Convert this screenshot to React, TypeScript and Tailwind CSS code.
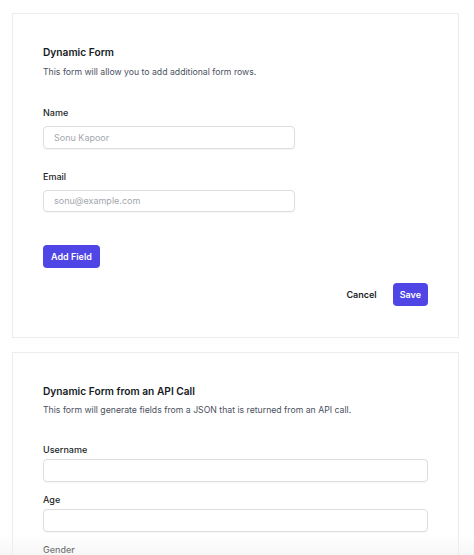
const font = { fontFamily: 'Inter, "Liberation Sans", sans-serif' };

const inputCls =
  'h-[22.5px] rounded-[4px] border border-[#dcdde0] bg-white px-[10px] text-[9px] text-gray-900 placeholder:text-[#a3a7ae] shadow-[0_1px_1px_rgba(0,0,0,0.04)] outline-none';

function Label({ children }: { children: string }) {
  return <label className="block h-[12px] text-[9px] font-medium leading-[12px] text-[#1b1f27]">{children}</label>;
}

export default function App() {
  return (
    <div className="relative min-h-[555px] bg-white antialiased" style={font}>
      {/* Dynamic Form */}
      <div className="ml-[12px] mr-[15px] mt-[13px] border border-[#ececee] px-[30px] pb-[31px] pt-[31px]">
        <h2 className="h-[14px] text-[10.2px] font-semibold leading-[14px] text-[#161a22]">Dynamic Form</h2>
        <p className="mt-[7px] h-[12px] text-[8.7px] leading-[12px] text-[#4b5160]">
          This form will allow you to add additional form rows.
        </p>

        <div className="mt-[29px]">
          <Label>Name</Label>
          <input className={`${inputCls} mt-[7px] w-[252px]`} placeholder="Sonu Kapoor" />
        </div>
        <div className="mt-[22px]">
          <Label>Email</Label>
          <input className={`${inputCls} mt-[7px] w-[252px]`} placeholder="sonu@example.com" />
        </div>

        <button className="mt-[33px] h-[23px] rounded-[4px] bg-[#4f46e5] px-[8px] text-[9px] font-semibold text-white">
          Add Field
        </button>

        <div className="mt-[15px] flex items-center justify-end gap-[16px]">
          <button className="text-[9px] font-semibold text-[#1b1f27]">Cancel</button>
          <button className="h-[23px] rounded-[4px] bg-[#4f46e5] px-[7px] text-[9px] font-semibold text-white">
            Save
          </button>
        </div>
      </div>

      {/* Dynamic Form from an API Call */}
      <div className="ml-[12px] mr-[15px] mt-[14px] border border-[#ececee] px-[30px] pb-[30px] pt-[31px]">
        <h2 className="h-[14px] text-[10.2px] font-semibold leading-[14px] text-[#161a22]">
          Dynamic Form from an API Call
        </h2>
        <p className="mt-[6px] h-[12px] text-[8.7px] leading-[12px] text-[#4b5160]">
          This form will generate fields from a JSON that is returned from an API call.
        </p>

        <div className="mt-[28px]">
          <Label>Username</Label>
          <input className={`${inputCls} mt-[2px] w-full`} />
        </div>
        <div className="mt-[12px]">
          <Label>Age</Label>
          <input className={`${inputCls} mt-[2px] w-full`} />
        </div>
        <div className="mt-[12px]">
          <Label>Gender</Label>
          <input className={`${inputCls} mt-[2px] w-full`} />
        </div>
      </div>

      {/* bottom window shade */}
      <div className="pointer-events-none fixed inset-x-0 bottom-0 h-[22px] bg-gradient-to-b from-transparent to-[#eeeeee] opacity-50" />
    </div>
  );
}
